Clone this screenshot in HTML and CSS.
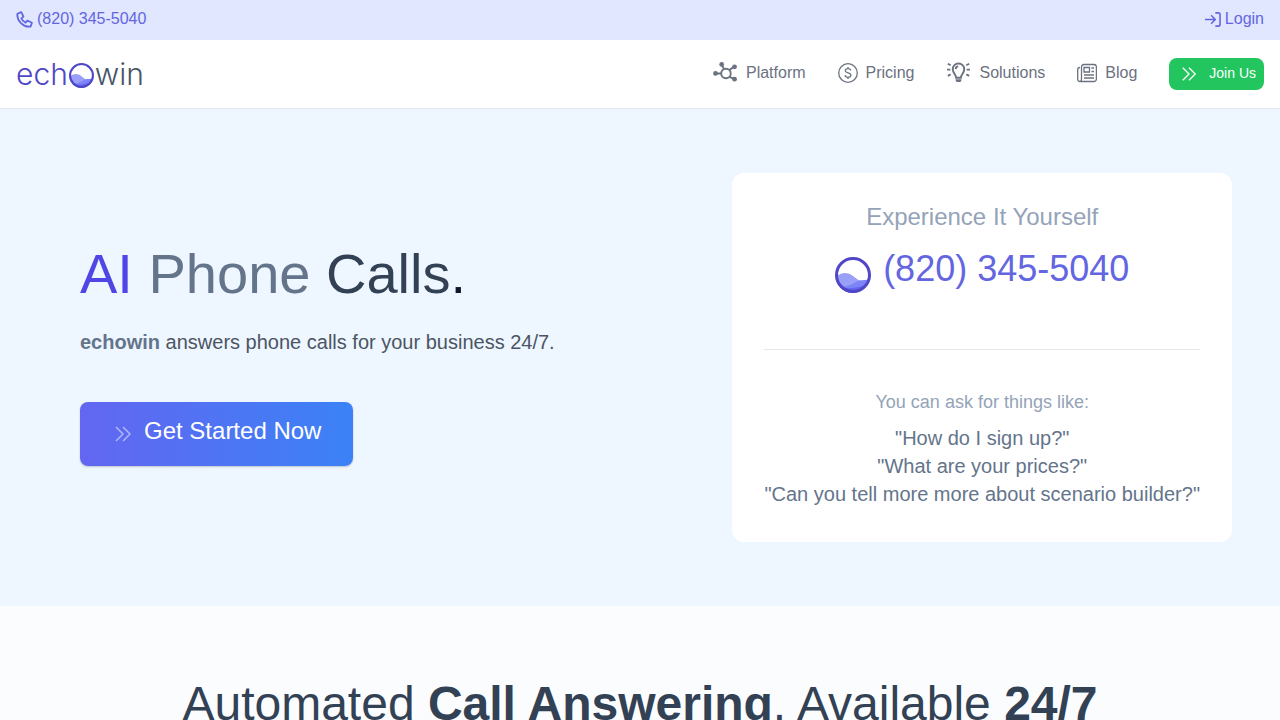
FILE: index.html
```
<!DOCTYPE html>
<html lang="en">
<head>
    <meta charset="UTF-8">
    <meta name="viewport" content="width=device-width, initial-scale=1.0">
    <title>echowin</title>
    <link rel="stylesheet" href="styles.css">
</head>
<body>

<svg class="sprite" aria-hidden="true">
    <symbol id="wave" viewBox="0 0 36 36">
        <circle cx="18" cy="18" r="16.5" fill="#fff"/>
        <path d="M2 19C7 15 13 15 18 19C23 23 28 27 34 23A16.500 16.500 0 0 1 2 19Z" fill="#9a9ff8"/>
        <path d="M2 27C9 31 15 29 21 25C26 22 30 24 34 22A16.500 16.500 0 0 1 3 27Z" fill="#7c84f8"/>
        <path d="M4 29C12 33 24 31 32 27A16.500 16.500 0 0 1 4 29Z" fill="#6366f1"/>
        <circle cx="18" cy="18" r="16.5" fill="none" stroke="#4f46c8" stroke-width="3"/>
    </symbol>
    <symbol id="chevrons" viewBox="0 0 18 18">
        <path d="M2 2l7 7-7 7M9 2l7 7-7 7" fill="none" stroke="currentColor" stroke-width="1.5"/>
    </symbol>
</svg>

<div class="topbar">
    <a href="tel:8203455040">
        <svg class="icon-phone" viewBox="0 0 24 24"><path d="M2 4L7.500 1.500L10.500 8L7.500 10.500Q9.500 14.500 13.500 16.500L16 13.500L22.500 16.500L20.500 22Q13 23 7 17T2 4Z"/></svg>
        (820) 345-5040
    </a>
    <a href="#login">
        <svg class="icon-login" viewBox="0 0 18 18"><path d="M1 9h11M7.500 4.500L12 9l-4.500 4.500M12 2h3q2 0 2 2v10q0 2-2 2h-3"/></svg>
        Login
    </a>
</div>

<header class="header">
    <a href="#home" class="logo" aria-label="echowin"><span class="logo-echo">ech</span><svg class="logo-wave"><use href="#wave"/></svg><span class="logo-win">win</span></a>
    <nav class="nav">
        <a href="#platform">
            <svg class="icon-wide" viewBox="0 0 26 22" fill="none" stroke="currentColor" stroke-width="2">
                <circle cx="13.500" cy="12" r="5"/>
                <path d="M2 12h6.500M9 3l2.500 4.500M17 8.500l5.500-4M17 15.500l5.500 2.500"/>
                <g fill="currentColor" stroke="none"><circle cx="2.500" cy="12" r="2.500"/><circle cx="9" cy="2.500" r="2.500"/><circle cx="22.500" cy="5" r="2.500"/><circle cx="22.500" cy="18" r="2.500"/></g>
            </svg>
            Platform
        </a>
        <a href="#pricing">
            <svg class="icon" viewBox="0 0 20 20" fill="none" stroke="currentColor" stroke-width="1.300">
                <circle cx="10" cy="10" r="9.300"/>
                <path d="M12.800 7.500C12.500 6 11.500 5.600 10 5.600C8.400 5.600 7.300 6.300 7.300 7.700C7.300 10.500 12.900 9 12.900 12.100C12.900 13.500 11.700 14.300 10 14.300C8.300 14.300 7.300 13.600 7 12.200M10 4v2M10 14v2"/>
            </svg>
            Pricing
        </a>
        <a href="#solutions">
            <svg class="icon-wide" viewBox="0 0 26 22" fill="none" stroke="currentColor" stroke-width="2">
                <path d="M10.500 16.500C10.500 13 7 12 7 7.500A6 6 0 0 1 19 7.500C19 12 15.500 13 15.500 16.500ZM10 7.500Q10.200 4.800 12.700 4.600"/>
                <path d="M10 18h6v1q0 2-3 2t-3-2z" fill="currentColor" stroke="none"/>
                <path d="M1 8h3.500M21.500 8h3.500M1.800 1.800l3 1.600M24.200 1.800l-3 1.600M1.800 14.500l3-1.600M24.200 14.500l-3-1.600"/>
            </svg>
            Solutions
        </a>
        <a href="#blog">
            <svg class="icon" viewBox="0 0 20 20" fill="none" stroke="currentColor" stroke-width="1.300">
                <path d="M4.500 16V4q0-2.500 2.500-2.500h10q2.400 0 2.400 2.500v12q0 2.500-2.400 2.500H3Q.7 18.500.7 16V6.500Q.7 4.500 3 4.500M4.500 16q0 2.500-1.800 2.500"/>
                <path d="M7 4.500h5.500V9H7zM14.500 5h2.500M14.500 8.500h2.500M7 12h10M7 15h10"/>
            </svg>
            Blog
        </a>
        <a href="#join" class="join"><svg class="chevrons"><use href="#chevrons"/></svg>Join Us</a>
    </nav>
</header>

<main>
    <section class="hero">
        <div class="intro">
            <h1><span class="ai">AI</span> <span class="phone">Phone</span> <span class="calls">Calls</span>.</h1>
            <p><strong>echowin</strong> answers phone calls for your business 24/7.</p>
            <a href="#start" class="start"><svg class="chevrons"><use href="#chevrons"/></svg>Get Started Now</a>
        </div>
        <div class="card">
            <h2>Experience It Yourself</h2>
            <a href="tel:8203455040" class="call"><svg class="call-wave"><use href="#wave"/></svg>(820) 345-5040</a>
            <hr>
            <p class="hint">You can ask for things like:</p>
            <ul>
                <li>"How do I sign up?"</li>
                <li>"What are your prices?"</li>
                <li>"Can you tell more more about scenario builder?"</li>
            </ul>
        </div>
    </section>

    <section class="features">
        <h2>Automated <strong>Call Answering</strong>. Available <strong>24/7</strong></h2>
    </section>
</main>

</body>
</html>
```
FILE: styles.css
```
* {
  box-sizing: border-box;
}
body {
  margin: 0;
  font-family: "Liberation Sans", Arial, sans-serif;
  line-height: 24px;
  color: #0f172a;
  background-color: #f8fafc;
  overflow-x: hidden;
}
a {
  color: inherit;
  text-decoration: none;
}
h1, h2, p, ul {
  margin: 0;
  padding: 0;
  font-weight: normal;
}
.sprite {
  display: none;
}

.topbar {
  display: flex;
  justify-content: space-between;
  padding: 7px 16px 9px;
  color: #6366e0;
  background-color: #e0e7ff;
}
.topbar a {
  display: flex;
  align-items: center;
  gap: 4px;
}
.topbar svg {
  width: 17px;
  height: 17px;
  fill: none;
  stroke: currentColor;
  stroke-linejoin: round;
}
.icon-phone {
  stroke-width: 2.5;
}
.icon-login {
  stroke-width: 1.7;
}

.header {
  display: flex;
  align-items: center;
  justify-content: space-between;
  padding: 16px;
  background-color: #fff;
  border-bottom: 1px solid #e2e8f0;
}
.logo {
  display: flex;
  align-items: center;
  gap: 1px;
  font-family: Inter, sans-serif;
  font-size: 30px;
  font-weight: 300;
  line-height: 36px;
  color: #475569;
}
.logo-echo {
  color: #5046c8;
}
.logo-wave {
  width: 25px;
  height: 25px;
  margin-top: 2px;
}
.nav {
  display: flex;
  align-items: center;
  gap: 32px;
  color: #6b7280;
}
.nav a {
  display: flex;
  align-items: center;
  gap: 8px;
  padding-bottom: 3px;
}
.icon {
  width: 20px;
  height: 20px;
}
.icon-wide {
  width: 25px;
  height: 21px;
}
.nav .join {
  gap: 12px;
  height: 32px;
  padding: 0 8px 3px 12px;
  font-size: 14px;
  color: #fff;
  background-color: #22c55e;
  border-radius: 8px;
}
.chevrons {
  width: 18px;
  height: 18px;
}
.join .chevrons {
  width: 16px;
  margin-top: 3px;
}

.hero {
  display: flex;
  align-items: center;
  justify-content: space-between;
  padding: 64px 48px 64px 80px;
  background-color: #eef6ff;
}
.intro {
  padding-bottom: 6px;
}
h1 {
  font-size: 56px;
  line-height: 60px;
}
.ai {
  color: #4f46e5;
}
.phone {
  color: #64748b;
}
.calls {
  color: #334155;
}
.intro p {
  margin-top: 24px;
  font-size: 20px;
  line-height: 28px;
  color: #4b5563;
}
.intro strong {
  color: #64748b;
}
.start {
  display: inline-flex;
  align-items: center;
  gap: 12px;
  height: 64px;
  margin-top: 46px;
  padding: 0 32px 6px 34px;
  font-size: 24px;
  color: #fff;
  background-image: linear-gradient(to right, #6366f1, #3b82f6);
  border-radius: 8px;
  box-shadow: 0 1px 2px rgba(0, 0, 0, .2);
}
.start .chevrons {
  margin-top: 6px;
  opacity: .5;
}

.card {
  padding: 28px 32px 34px;
  text-align: center;
  background-color: #fff;
  border-radius: 12px;
}
.card h2 {
  font-size: 24px;
  line-height: 32px;
  color: #94a3b8;
}
.call {
  display: flex;
  align-items: flex-start;
  justify-content: center;
  gap: 12px;
  margin-top: 16px;
  font-size: 36px;
  line-height: 40px;
  color: #6366e0;
}
.call-wave {
  width: 36px;
  height: 36px;
  margin-top: 8px;
}
hr {
  margin: 56px 0 38px;
  border: 0;
  border-top: 1px solid #e5e7eb;
}
.hint {
  font-size: 18px;
  line-height: 28px;
  color: #94a3b8;
}
.card ul {
  margin-top: 8px;
  list-style: none;
  font-size: 20px;
  line-height: 28px;
  color: #64748b;
}

.features {
  padding: 74px 16px;
  text-align: center;
  color: #334155;
  background-color: #fafcfe;
}
.features h2 {
  font-size: 48px;
  line-height: 48px;
}
```
